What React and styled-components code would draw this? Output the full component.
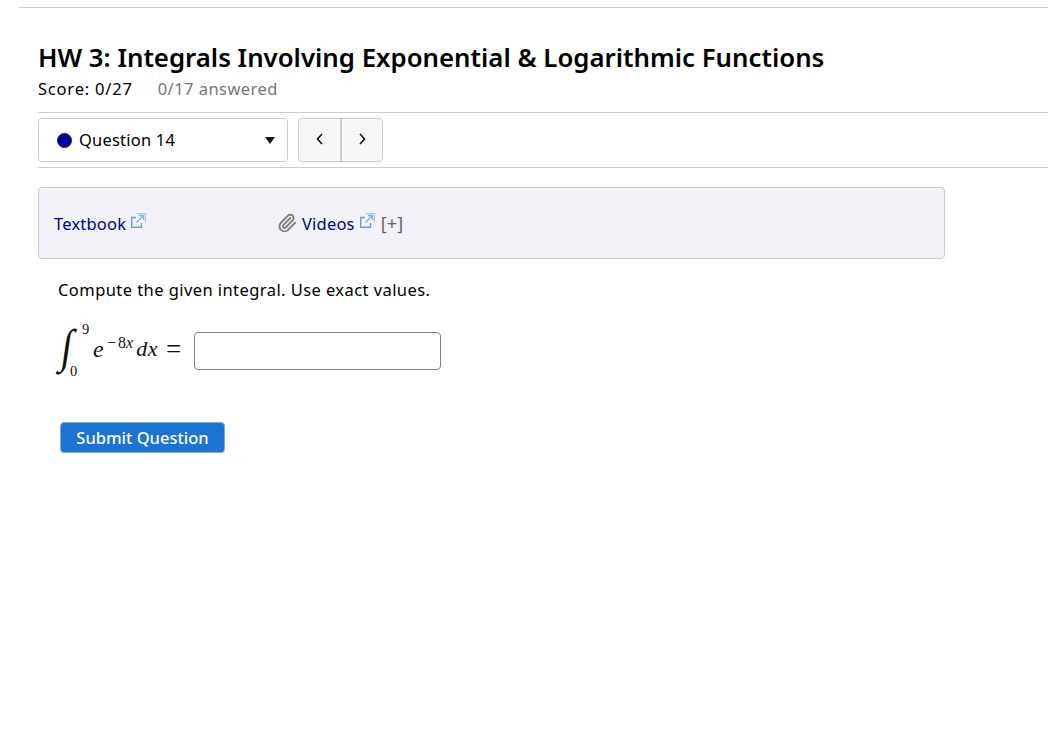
import React from "react";
import styled, { createGlobalStyle } from "styled-components";

const Global = createGlobalStyle`
  html, body { margin: 0; padding: 0; background: #fff; }
  body { font-family: "Noto Sans", "Open Sans", sans-serif; color: #000; overflow: hidden; }
  * { box-sizing: border-box; }
`;
const Page = styled.div`
  width: 1048px; height: 747px; padding: 7px 0 0 19px; overflow: hidden;
`;
const TopRule = styled.hr`
  margin: 0; border: 0; border-top: 1px solid #ccc;
`;
const Content = styled.main`
  padding: 0 0 0 19px;
`;
const Title = styled.h1`
  margin: 32px 0 0; height: 35px; font-size: 25.8px; line-height: 34px; font-weight: 600; white-space: nowrap;
`;
const ScoreLine = styled.div`
  display: flex; gap: 25px; height: 24px; margin-top: 2px; font-size: 16.5px; line-height: 24px;
`;
const Score = styled.span`
  letter-spacing: 0.8px;
`;
const Answered = styled.span`
  color: #777; letter-spacing: 0.45px;
`;
const NavBar = styled.div`
  display: flex; gap: 10px; margin-top: 11px; height: 56px; padding: 5px 0; border-top: 1px solid #ccc; border-bottom: 1px solid #ccc;
`;
const Select = styled.div`
  width: 250px; height: 44px; display: flex; align-items: center; padding: 0 12px 0 18px; gap: 7px;
  background: #fff; border: 1px solid #ccc; border-radius: 4px; font-size: 16.5px; letter-spacing: 0.2px;
`;
const Dot = styled.span`
  width: 15px; height: 15px; border-radius: 50%; background: #00009c; border: 1px solid #223; flex: none;
`;
const SelectLabel = styled.span`
  flex: 1; margin-top: -2px;
`;
const Caret = styled.span`
  width: 0; height: 0; border-left: 5px solid transparent; border-right: 5px solid transparent; border-top: 7px solid #111;
`;
const Pager = styled.div`
  display: flex; height: 44px; border: 1px solid #ccc; border-radius: 4px; background: #f7f7f7; overflow: hidden;
`;
const PageButton = styled.div`
  width: ${p => p.$w}px; display: flex; align-items: center; justify-content: center; padding-bottom: 2px;
  & + & { border-left: 2px solid #ccc; }
`;
const Panel = styled.section`
  width: 907px; height: 72px; margin-top: 19px; display: flex; align-items: center; padding-left: 15px;
  background: #f2f2f8; border: 1px solid #ccc; border-radius: 4px; font-size: 16.5px; letter-spacing: 0.2px;
`;
const Resource = styled.span`
  display: flex; align-items: center; width: ${p => p.$w ? `${p.$w}px` : "auto"};
`;
const LinkText = styled.a`
  color: #00008b; text-decoration: none; margin-left: ${p => p.$ml || 0}px;
`;
const Plus = styled.span`
  color: #666; margin-left: 6px; font-size: 18px;
`;
const Body = styled.div`
  padding: 19px 0 0 20px;
`;
const Prompt = styled.p`
  margin: 0; font-size: 16.5px; line-height: 24px; letter-spacing: 0.43px;
`;
const MathRow = styled.div`
  display: flex; align-items: center; height: 60px; margin-top: 18px; font-family: "Liberation Serif", "DejaVu Serif", serif; color: #111;
`;
const IntegralSign = styled.span`
  font-family: "Liberation Serif", serif; font-size: 47px; line-height: 60px; width: 9px; margin: -8px 0 0 3px;
  transform: skewX(-8deg) scaleX(0.85);
`;
const Limits = styled.span`
  display: flex; flex-direction: column; justify-content: space-between; height: 56px; width: 23px; font-size: 14.5px; line-height: 14px;
`;
const Limit = styled.span`
  margin-left: ${p => p.$ml}px;
`;
const Base = styled.i`
  font-size: 24px; margin-top: -2px; width: 11px;
`;
const Sup = styled.span`
  font-size: 16px; margin: -14px 3px 0 3px; white-space: pre;
`;
const Minus = styled.span`
  margin-right: 2px;
`;
const Differential = styled.i`
  font-size: 22px; margin-top: -2px; letter-spacing: 0.6px;
`;
const Equals = styled.span`
  font-size: 27px; margin: -2px 13px 0 8px;
`;
const Answer = styled.input`
  width: 247px; height: 38px; margin-top: 1px; border: 1px solid #808080; border-radius: 4px; background: #fff;
`;
const Submit = styled.button`
  display: block; margin: 42px 0 0 2px; width: 165px; height: 31px; padding: 0; background: #1b74d4; color: #fff;
  border: 1px solid #7fa8d4; border-radius: 4px; font: 500 16.5px/28px "Noto Sans", sans-serif;
`;

const Chevron = ({ d }) => (
  <svg width="10" height="14" viewBox="0 0 10 14" fill="none" stroke="#111" strokeWidth="1.6">
    <path d={d} />
  </svg>
);
const External = () => (
  <svg width="15" height="15" viewBox="0 0 15 15" fill="none" style={{ marginTop: -5, marginLeft: 5, flex: "none" }}>
    <path d="M5 4.5H0.7V14.3H10.5V10" stroke="#6f9fd0" strokeWidth="1.4" />
    <path d="M5.5 0.6H14.4V9.5" stroke="#a9c9e8" strokeWidth="1.2" />
    <path d="M12.5 2.5H8M12.5 2.5V7M12.5 2.5L5.5 9.5" stroke="#7fb0dc" strokeWidth="1.3" />
  </svg>
);
const Clip = () => (
  <svg width="20" height="20" viewBox="0 0 24 24" fill="none" stroke="#808080" strokeWidth="2.3" strokeLinecap="round" strokeLinejoin="round" style={{ flex: "none" }}>
    <path d="m16 6-8.414 8.586a2 2 0 0 0 2.829 2.829l8.414-8.586a4 4 0 1 0-5.657-5.657l-8.379 8.551a6 6 0 1 0 8.485 8.485l8.472-8.472" />
  </svg>
);

export default function App() {
  return (
    <Page>
      <Global />
      <TopRule />
      <Content>
        <Title>HW 3: Integrals Involving Exponential &amp; Logarithmic Functions</Title>
        <ScoreLine>
          <Score>Score: 0/27</Score>
          <Answered>0/17 answered</Answered>
        </ScoreLine>
        <NavBar>
          <Select>
            <Dot />
            <SelectLabel>Question 14</SelectLabel>
            <Caret />
          </Select>
          <Pager>
            <PageButton $w={41}><Chevron d="M7 2L2.5 7L7 12" /></PageButton>
            <PageButton $w={42}><Chevron d="M3 2L7.5 7L3 12" /></PageButton>
          </Pager>
        </NavBar>
        <Panel>
          <Resource $w={223}>
            <LinkText>Textbook</LinkText>
            <External />
          </Resource>
          <Resource>
            <Clip />
            <LinkText $ml={5}>Videos</LinkText>
            <External />
            <Plus>[+]</Plus>
          </Resource>
        </Panel>
        <Body>
          <Prompt>Compute the given integral. Use exact values.</Prompt>
          <MathRow>
            <IntegralSign>∫</IntegralSign>
            <Limits><Limit $ml={12}>9</Limit><Limit $ml={0}>0</Limit></Limits>
            <Base>e</Base>
            <Sup><Minus>−</Minus>8<i>x</i></Sup>
            <Differential>dx</Differential>
            <Equals>=</Equals>
            <Answer />
          </MathRow>
          <Submit>Submit Question</Submit>
        </Body>
      </Content>
    </Page>
  );
}
